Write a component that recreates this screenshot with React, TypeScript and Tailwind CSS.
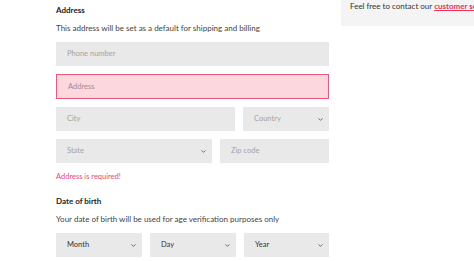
import { ChevronDown } from "lucide-react";

const font = { fontFamily: "Lato, 'Noto Sans', sans-serif" };

function Field({ placeholder, error, className = "" }: { placeholder: string; error?: boolean; className?: string }) {
  return (
    <div
      className={
        "h-6 flex items-center pl-[11px] text-[7.5px] " +
        (error
          ? "bg-[#fdd7de] border-[1.5px] border-[#e9577b] text-[#a08a8f] h-[25px]"
          : "bg-[#e9e9e9] text-[#a3a3a3]") +
        " " +
        className
      }
    >
      {placeholder}
    </div>
  );
}

function Select({ label, dark, className = "" }: { label: string; dark?: boolean; className?: string }) {
  return (
    <div
      className={
        "h-6 flex items-center justify-between pl-[11px] pr-[5px] bg-[#e9e9e9] text-[7.5px] " +
        (dark ? "text-[#333]" : "text-[#a3a3a3]") +
        " " +
        className
      }
    >
      <span>{label}</span>
      <ChevronDown className="w-[7px] h-[7px] text-[#444]" strokeWidth={2.5} />
    </div>
  );
}

export default function App() {
  return (
    <div className="w-[474px] h-[261px] bg-white overflow-hidden flex" style={font}>
      <div className="w-[273px] ml-[56px] shrink-0 pt-[6px] flex flex-col">
        <div className="text-[8px] font-bold text-[#222] leading-[9px]">Address</div>
        <div className="text-[8px] text-[#444] mt-[9px] leading-[9px]">
          This address will be set as a default for shipping and billing
        </div>
        <div className="mt-[9px] flex flex-col gap-2">
          <Field placeholder="Phone number" />
          <Field placeholder="Address" error />
          <div className="flex gap-2">
            <Field placeholder="City" className="w-[179px]" />
            <Select label="Country" className="flex-1" />
          </div>
          <div className="flex gap-2">
            <Select label="State" className="w-[156px]" />
            <Field placeholder="Zip code" className="flex-1" />
          </div>
        </div>
        <div className="text-[7.5px] text-[#e9477a] mt-[9px] leading-[9px]">Address is required!</div>
        <div className="text-[8px] font-bold text-[#222] mt-[16px] leading-[9px]">Date of birth</div>
        <div className="text-[8px] text-[#444] mt-[9px] leading-[9px]">
          Your date of birth will be used for age verification purposes only
        </div>
        <div className="mt-[9px] flex gap-2">
          <Select label="Month" dark className="w-[86px]" />
          <Select label="Day" dark className="w-[86px]" />
          <Select label="Year" dark className="flex-1" />
        </div>
      </div>
      <div className="ml-[12px] w-[200px] h-[26px] shrink-0 bg-[#f4f4f4] pl-[9px] text-[8px] leading-[12px] text-[#333] whitespace-nowrap">
        Feel free to contact our{" "}
        <span className="text-[#e8305a] font-bold underline">customer service</span>
      </div>
    </div>
  );
}
